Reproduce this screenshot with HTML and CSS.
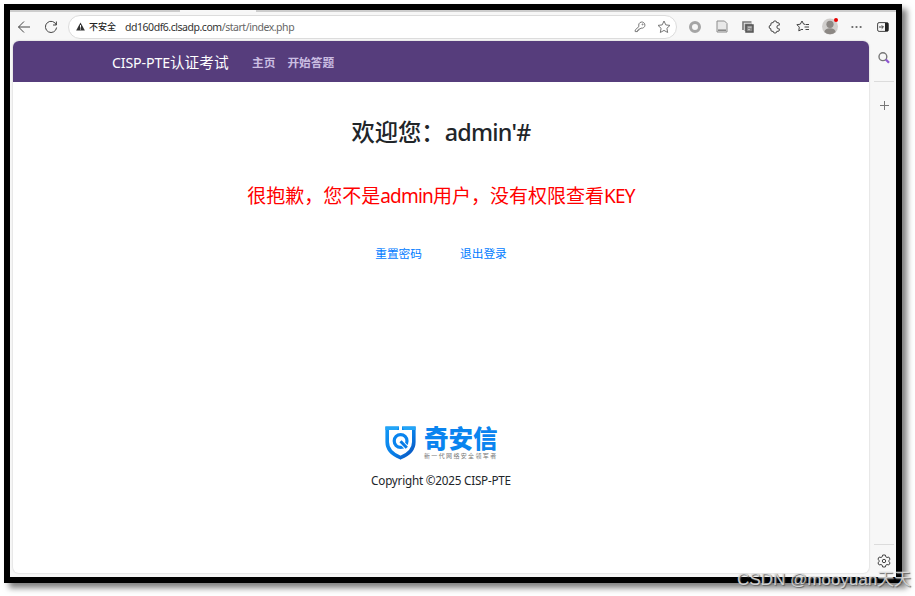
FILE: index.html
```
<!DOCTYPE html>
<html lang="zh-CN">
	<head>
		<meta charset="utf-8">
		<title>CISP-PTE认证考试</title>
		<link rel="stylesheet" href="styles.css">
	</head>
	<body>
		<div id="browser">
			<div class="tabs"><div class="tab"></div></div>
			<div class="toolbar">
				<span class="icon"><svg width="14" height="14" viewBox="0 0 14 14"><path d="M13 7H1.5M7 1.5L1.5 7L7 12.5"/></svg></span>
				<span class="icon"><svg width="14" height="14" viewBox="0 0 14 14"><path d="M12.3 5A5.6 5.6 0 1 0 12.6 7.5M12.4 1.5V5H9"/></svg></span>
				<div class="address">
					<svg class="warn" width="9" height="9" viewBox="0 0 9 9"><path d="M4.5 .4L8.9 8.5H.1Z"/><path class="mark" d="M4.5 3V5.7M4.5 6.5V7.5"/></svg>
					<span class="unsafe">不安全</span>
					<span class="url">dd160df6.clsadp.com<i>/start/index.php</i></span>
					<svg class="key" width="12" height="12" viewBox="0 0 12 12"><path d="M5 5.4A3.1 3.1 0 1 1 7 7.1L6 8H4.8V9.3H3.5V10.6H1.2V9Z"/><circle cx="8.6" cy="3.4" r=".5"/></svg>
					<svg class="star" width="14" height="14" viewBox="0 0 14 14"><path d="M7 1L8.8 4.9L13 5.4L9.9 8.3L10.7 12.5L7 10.4L3.3 12.5L4.1 8.3L1 5.4L5.2 4.9Z"/></svg>
				</div>
				<span class="icon"><svg width="14" height="14" viewBox="0 0 14 14"><circle cx="7" cy="7" r="4.5" stroke="#a5a5a5" stroke-width="3"/></svg></span>
				<span class="icon"><svg width="12" height="13" viewBox="0 0 12 13"><path d="M1 1H8.5L11 3.5V12H1Z" stroke="#8c8c8c" fill="#e8e8e8"/><path d="M2 9.5H10" stroke="#b0b0b0"/><path d="M2 10.5H10" stroke="#888"/></svg></span>
				<span class="icon"><svg width="12" height="12" viewBox="0 0 12 12"><path d="M1 9V1H9.5" stroke="#777" stroke-width="1.6"/><path d="M2.5 2.5H10V4H4V10H2.5Z" fill="#999" stroke="none"/><rect x="4" y="4" width="7" height="7" fill="#888" stroke="#555" stroke-width="1.5"/><path d="M6 6.2H9.5M6 8.6H8" stroke="#ccc"/></svg></span>
				<span class="icon"><svg width="14" height="14" viewBox="0 0 14 14"><path d="M4 2.7H5.2A1.8 1.8 0 0 1 8.8 2.7H10.2Q11.3 2.7 11.3 4V5.2H10.7A1.8 1.8 0 0 0 10.7 8.8H11.3V10Q11.3 11.3 10.2 11.3H8.8A1.8 1.8 0 0 1 5.2 11.3H4Q2.9 11.3 2.9 10V8.8A1.8 1.8 0 0 1 2.9 5.2V4Q2.9 2.7 4 2.7Z"/></svg></span>
				<span class="line"></span>
				<span class="icon"><svg width="14" height="13" viewBox="0 0 14 13"><path d="M9 4.3L7.6 4.1L6 1L4.3 4.2L.9 4.7L3.3 7.1L2.8 10.9L6 9.2L7 9.8M9.5 4.5H13M8.5 7H13M9.5 9.5H13"/></svg></span>
				<span class="icon avatar"><svg width="16" height="17" viewBox="0 0 16 17"><circle cx="8" cy="8.5" r="8" fill="#d0cecc" stroke="none"/><circle cx="8" cy="6.3" r="3.6" fill="#8c8884" stroke="none"/><path d="M2.4 14A5.6 3.8 0 0 1 13.6 14A8 8 0 0 1 2.4 14Z" fill="#8c8884" stroke="none"/></svg><b></b></span>
				<span class="icon"><svg width="11" height="4" viewBox="0 0 11 4"><path d="M.5 2H2.3M4.6 2H6.4M8.7 2H10.5" stroke-width="1.7"/></svg></span>
				<span class="icon"><svg width="12" height="10" viewBox="0 0 12 10"><rect x=".6" y=".6" width="10.8" height="8.8" rx="1.5"/><path d="M8 1H11V9H8Z" fill="#222" stroke="none"/><path d="M2 5H6.3M4.7 3.3L6.4 5L4.7 6.7"/></svg></span>
			</div>
			<div class="view">
				<div class="page">
					<div class="navbar">
						<a class="brand" href="#"><span>CISP-PTE</span>认证考试</a>
						<a class="link" href="#">主页</a>
						<a class="link" href="#">开始答题</a>
					</div>
					<div class="content">
						<h2>欢迎您：<span>admin'#</span></h2>
						<p class="error">很抱歉，您不是<span>admin</span>用户，没有权限查看<span>KEY</span></p>
						<div class="actions">
							<a href="#">重置密码</a>
							<a href="#">退出登录</a>
						</div>
					</div>
					<div class="footer">
						<div class="logo">
							<svg width="31" height="34" viewBox="0 0 31 34">
								<defs><linearGradient id="blue" x1="0" y1="0" x2="1" y2="1"><stop offset="0" stop-color="#1296f5"/><stop offset=".6" stop-color="#087be5"/><stop offset="1" stop-color="#0b4fb8"/></linearGradient></defs>
								<path d="M14 2.2H2.2V16C2.2 24 7.5 28.5 15.5 31.7C23.5 28.5 28.8 24 28.8 16V2.2H17" fill="none" stroke="url(#blue)" stroke-width="3.6"/>
								<path d="M.4 .4H14L12 4H.4ZM17 .4H30.6V4H19Z" fill="#22a5f7"/>
								<circle cx="15.6" cy="15" r="6.4" fill="none" stroke="#0a84ef" stroke-width="3.2"/>
								<path d="M15.2 15L22.3 22.4" stroke="#fff" stroke-width="4.8"/>
								<path d="M15.5 15.2L21.8 21.8" stroke="#087be5" stroke-width="3"/>
							</svg>
							<div class="words"><strong>奇安信</strong><small>新一代网络安全领军者</small></div>
						</div>
						<div class="copyright">Copyright ©2025 CISP-PTE</div>
					</div>
				</div>
				<div class="sidebar">
					<svg width="12" height="12" viewBox="0 0 12 12"><circle cx="4.9" cy="4.7" r="3.9" stroke="#777" stroke-width="1.4"/><path d="M7.8 7.5L11 10.8" stroke="#8d55d0" stroke-width="2.2"/></svg>
					<hr>
					<svg class="plus" width="9" height="9" viewBox="0 0 9 9"><path d="M4.5 0V9M0 4.5H9" stroke="#777"/></svg>
					<hr class="bottom">
					<svg class="gear" width="14" height="14" viewBox="0 0 14 14"><path d="M5.7 1H8.3L8.8 2.8L10 3.5L11.8 3L13.1 5.3L11.8 6.5V7.6L13.1 8.8L11.8 11L10 10.5L8.8 11.2L8.3 13H5.7L5.2 11.2L4 10.5L2.2 11L.9 8.8L2.2 7.6V6.5L.9 5.3L2.2 3L4 3.5L5.2 2.8Z"/><circle cx="7" cy="7" r="1.7"/></svg>
				</div>
			</div>
		</div>
		<div id="watermark">CSDN @mooyuan天天</div>
	</body>
</html>
```
FILE: styles.css
```
body,h2,p{
	margin: 0;
	padding: 0;
}
body{
	width: 915px;
	height: 596px;
	overflow: hidden;
	position: relative;
	background-color: white;
	font-family: "Noto Sans", "Noto Sans CJK SC", sans-serif;
}
a{
	text-decoration: none;
}
svg{
	display: block;
	flex: none;
	fill: none;
	stroke: #444;
	stroke-width: 1;
}
#browser{
	box-sizing: border-box;
	width: 898px;
	height: 579px;
	margin: 4px 0 0 4px;
	border: 6px solid black;
	background-color: #f7f7f7;
	box-shadow: 5px 5px 6px rgba(0,0,0,0.5);
	display: flex;
	flex-direction: column;
}
.tabs{
	height: 2px;
	background-color: #cdcdcd;
}
.tab{
	width: 76px;
	height: 2px;
	margin-left: 170px;
	background-color: #f7f7f7;
}
.toolbar{
	height: 29px;
	display: flex;
	align-items: center;
	padding-left: 1px;
}
.icon{
	width: 26.5px;
	flex: none;
	display: flex;
	justify-content: center;
	position: relative;
}
.line{
	width: 1px;
	height: 12px;
	margin: 0 2px 0 0;
	background-color: #d5d5d5;
}
.avatar b{
	width: 4px;
	height: 4px;
	border-radius: 4px;
	background-color: #e80000;
	position: absolute;
	right: 5px;
	top: 0;
}
.address{
	box-sizing: border-box;
	width: 609px;
	flex: none;
	height: 24px;
	margin: 0 5px 0 4px;
	padding: 0 5px 0 7px;
	border: 1px solid #dcdcdc;
	border-radius: 12px;
	background-color: white;
	display: flex;
	align-items: center;
}
.warn{
	fill: #333;
	stroke: none;
}
.warn .mark{
	stroke: white;
}
.unsafe{
	margin-left: 4px;
	width: 36px;
	font-size: 9px;
	color: #222;
	font-weight: 500;
	white-space: nowrap;
}
.url{
	font-size: 10.5px;
	letter-spacing: -0.46px;
	color: #333;
}
.url i{
	font-style: normal;
	color: #666;
}
.key{
	margin-left: auto;
	stroke: #777;
}
.star{
	margin-left: 11px;
	stroke: #777;
}
.view{
	flex: 1;
	display: flex;
}
.page{
	box-sizing: border-box;
	width: 856px;
	flex: none;
	height: 532px;
	margin-left: 3px;
	border-radius: 6px;
	background-color: white;
	box-shadow: 0 0 1px 1px #e6e6e6;
	overflow: hidden;
}
.navbar{
	height: 41px;
	padding-left: 99px;
	background-color: #563d7c;
	display: flex;
	align-items: center;
}
.brand{
	width: 140px;
	color: white;
	font-size: 14.7px;
	white-space: nowrap;
}
.brand span{
	font-size: 14.2px;
	letter-spacing: -0.15px;
}
.link{
	margin-right: 12px;
	font-size: 11.7px;
	font-weight: 700;
	color: #cbbde2;
}
.content{
	height: 342px;
	text-align: center;
}
h2{
	padding-top: 32px;
	font-size: 23.3px;
	line-height: 36px;
	font-weight: 500;
	color: #212529;
}
h2 span{
	letter-spacing: -0.75px;
}
.error{
	padding-top: 32px;
	font-size: 19px;
	line-height: 28px;
	color: red;
}
.error span{
	letter-spacing: -0.8px;
}
.actions{
	padding-top: 34px;
	line-height: 18px;
	font-size: 11.7px;
	display: flex;
	justify-content: center;
	gap: 38px;
}
.actions a{
	color: #007bff;
}
.footer{
	display: flex;
	flex-direction: column;
	align-items: center;
}
.logo{
	width: 112px;
	height: 36px;
	display: flex;
	align-items: center;
}
.logo svg{
	margin-top: 1px;
	stroke: none;
}
.words{
	margin: 3px 0 0 8px;
	white-space: nowrap;
}
.words strong{
	display: block;
	font-size: 24.5px;
	line-height: 25px;
	font-weight: 900;
	color: #0a84ef;
}
.words small{
	display: block;
	font-size: 6px;
	line-height: 10px;
	letter-spacing: 1.35px;
	color: #777;
}
.copyright{
	margin-top: 11px;
	font-size: 11.7px;
	line-height: 18px;
	letter-spacing: -0.22px;
	color: #212529;
}
.sidebar{
	width: 24px;
	display: flex;
	flex-direction: column;
	align-items: center;
	padding-top: 11px;
	margin-left: 3px;
}
.sidebar hr{
	width: 20px;
	height: 1px;
	margin: 17px 0 19px;
	border: 0;
	background-color: #dcdcdc;
}
.sidebar .bottom{
	margin: auto 0 9px;
}
.gear{
	margin-bottom: 9px;
}
#watermark{
	position: absolute;
	left: 737px;
	top: 568px;
	font: 17px/24px "Liberation Sans", "Noto Sans CJK SC", sans-serif;
	color: rgba(225,225,225,0.85);
	text-shadow: 1px 1px 1px #666;
	white-space: nowrap;
}
```
